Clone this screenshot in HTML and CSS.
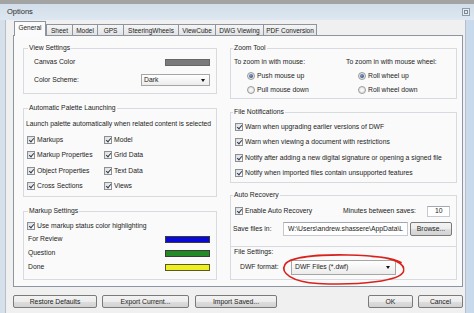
FILE: index.html
```html
<!DOCTYPE html>
<html>
<head>
<meta charset="utf-8">
<title>Options</title>
<link rel="stylesheet" href="styles.css">
</head>
<body>
<div class="window">
  <div class="titlebar">
    <span class="title">Options</span>
    <span class="close"><span class="close-inner"></span></span>
  </div>
  <div class="client">
    <div class="tabs">
      <div class="tab active t-general">General</div>
      <div class="tab t-sheet">Sheet</div>
      <div class="tab t-model">Model</div>
      <div class="tab t-gps">GPS</div>
      <div class="tab t-steer">SteeringWheels</div>
      <div class="tab t-cube">ViewCube</div>
      <div class="tab t-dwg">DWG Viewing</div>
      <div class="tab t-pdf">PDF Conversion</div>
    </div>
    <div class="panel">
      <div class="col col-l">
        <fieldset class="group g-view">
          <legend>View Settings</legend>
          <div class="gbody b-view">
            <div class="row r-14"><span>Canvas Color</span><span class="swatch sw-gray"></span></div>
            <div class="row r-14 mt4"><span>Color Scheme:</span><span class="combo combo-dark"><span class="combo-text">Dark</span><span class="arrow"></span></span></div>
          </div>
        </fieldset>

        <fieldset class="group g-auto">
          <legend>Automatic Palette Launching</legend>
          <div class="gbody b-auto">
            <div class="line r-14">Launch palette automatically when related content is selected</div>
            <div class="cb-grid">
              <div class="item"><span class="cb"></span><span>Markups</span></div>
              <div class="item"><span class="cb"></span><span>Model</span></div>
              <div class="item"><span class="cb"></span><span>Markup Properties</span></div>
              <div class="item"><span class="cb"></span><span>Grid Data</span></div>
              <div class="item"><span class="cb"></span><span>Object Properties</span></div>
              <div class="item"><span class="cb"></span><span>Text Data</span></div>
              <div class="item"><span class="cb"></span><span>Cross Sections</span></div>
              <div class="item"><span class="cb"></span><span>Views</span></div>
            </div>
          </div>
        </fieldset>

        <fieldset class="group g-markup">
          <legend>Markup Settings</legend>
          <div class="gbody b-markup">
            <div class="item r-13"><span class="cb"></span><span>Use markup status color highlighting</span></div>
            <div class="row r-14 indent1"><span>For Review</span><span class="swatch sw-blue"></span></div>
            <div class="row r-14 indent1"><span>Question</span><span class="swatch sw-green"></span></div>
            <div class="row r-14 indent1"><span>Done</span><span class="swatch sw-yellow"></span></div>
          </div>
        </fieldset>
      </div>

      <div class="col col-r">
        <fieldset class="group g-zoom">
          <legend>Zoom Tool</legend>
          <div class="gbody b-zoom">
            <div class="zgrid">
              <span class="zcell">To zoom in with mouse:</span>
              <span class="zcell">To zoom in with mouse wheel:</span>
              <div class="item ri1"><span class="rb on"></span><span>Push mouse up</span></div>
              <div class="item ri2"><span class="rb on"></span><span>Roll wheel up</span></div>
              <div class="item ri1"><span class="rb"></span><span>Pull mouse down</span></div>
              <div class="item ri2"><span class="rb"></span><span>Roll wheel down</span></div>
            </div>
          </div>
        </fieldset>

        <fieldset class="group g-notif">
          <legend>File Notifications</legend>
          <div class="gbody b-notif">
            <div class="item r-15"><span class="cb"></span><span>Warn when upgrading earlier versions of DWF</span></div>
            <div class="item r-16"><span class="cb"></span><span>Warn when viewing a document with restrictions</span></div>
            <div class="item r-15"><span class="cb"></span><span>Notify after adding a new digital signature or opening a signed file</span></div>
            <div class="item r-16"><span class="cb"></span><span>Notify when imported files contain unsupported features</span></div>
          </div>
        </fieldset>

        <fieldset class="group g-recov">
          <legend>Auto Recovery</legend>
          <div class="gbody b-recov">
            <div class="recov-row r-14">
              <div class="item"><span class="cb"></span><span>Enable Auto Recovery</span></div>
              <span>Minutes between saves:</span>
              <span class="input input-min">10</span>
            </div>
            <div class="save-row r-16 mt3">
              <span class="save-lbl">Save files in:</span>
              <span class="input input-path">W:\Users\andrew.shassere\AppData\L</span>
              <span class="btn btn-browse">Browse...</span>
            </div>
          </div>
        </fieldset>

        <div class="fileset">
          <div class="fs-title">File Settings:</div>
          <div class="fs-row r-16 mt2">
            <span class="fs-lbl">DWF format:</span>
            <span class="combo combo-dwf"><span class="combo-text">DWF Files (*.dwf)</span><span class="arrow"></span></span>
          </div>
        </div>
      </div>
    </div>
    <div class="buttons">
      <span class="btn b-restore">Restore Defaults</span>
      <span class="btn b-export">Export Current...</span>
      <span class="btn b-import">Import Saved...</span>
      <span class="btn b-ok">OK</span>
      <span class="btn b-cancel">Cancel</span>
    </div>
  </div>
</div>
<svg class="annot" width="474" height="313" viewBox="0 0 474 313" xmlns="http://www.w3.org/2000/svg">
  <path d="M372 256.5 C392 257.5 406 263 403.5 271.5 C400 281 360 285.5 318 283.5 C292 282 280 273 285 264.5 C290 257 318 254.5 348 255 C372 255.5 393 258 401 262.5" fill="none" stroke="#d9221e" stroke-width="1.6" stroke-linecap="round"/>
</svg>
</body>
</html>
```

FILE: styles.css
```css
* { box-sizing: border-box; }
html, body { margin: 0; padding: 0; }
body {
  width: 474px;
  height: 313px;
  overflow: hidden;
  position: relative;
  font-family: "Liberation Sans", Arial, sans-serif;
  font-size: 6.8px;
  line-height: 8px;
  color: #1c1c1c;
  background: #d3dfec;
}
.window {
  display: flex;
  flex-direction: column;
  height: 313px;
  padding: 0 8px 0 5px;
  background: linear-gradient(to right, #d6e0ea 0, #dbe5f0 60%, #c9d9ec 100%);
}
.titlebar {
  flex: none;
  height: 20px;
  margin: 0 -8px 0 -5px;
  padding: 0 4px 0 7px;
  border-top: 4px solid #a3a3a3;
  display: flex;
  align-items: center;
  justify-content: space-between;
  background: linear-gradient(#d2deea, #dde7f1);
}
.title { font-size: 7.5px; color: #2a2a2a; }
.close {
  width: 8px; height: 8px;
  border: 1px solid #8f9cab;
  display: flex; align-items: center; justify-content: center;
  background: #e4ebf3;
}
.close-inner { width: 4px; height: 4px; border: 1px solid #7d8896; }

.client {
  flex: 1;
  background: #f0f0f0;
  border-left: 1px solid #b4bfcb;
  border-right: 1px solid #b4bfcb;
  padding: 1px 2px 0 7px;
  display: flex;
  flex-direction: column;
}

/* tabs */
.tabs {
  position: relative;
  z-index: 2;
  height: 15px;
  display: flex;
  align-items: flex-end;
  padding-left: 1px;
}
.tab {
  height: 11px;
  margin-bottom: 1px;
  margin-right: -1px;
  border: 1px solid #8d95a0;
  border-bottom: none;
  background: linear-gradient(#f5f5f5, #e3e3e3);
  display: flex;
  align-items: center;
  justify-content: center;
  font-size: 6.5px;
  white-space: nowrap;
  padding-top: 1px;
}
.tab.active {
  height: 15px;
  margin-bottom: 0;
  margin-right: 0;
  background: #fbfbfb;
  padding-top: 0;
  padding-bottom: 2px;
}
.t-general { width: 32px; }
.t-sheet { width: 27px; }
.t-model { width: 26px; }
.t-gps { width: 27px; }
.t-steer { width: 56px; }
.t-cube { width: 38px; }
.t-dwg { width: 49px; }
.t-pdf { width: 54px; }

.panel {
  position: relative;
  z-index: 1;
  height: 252px;
  margin-top: -1px;
  border: 1px solid #8d95a0;
  background: #fafafa;
  padding: 7px 5px 0 9px;
  display: grid;
  grid-template-columns: 194px 227px;
  column-gap: 13px;
  align-items: start;
}
.col { display: flex; flex-direction: column; }

.group {
  margin: 0;
  padding: 0;
  min-width: 0;
  border: 1px solid #d7dbdf;
}
.group legend {
  padding: 0 1px;
  height: 10px;
  line-height: 10px;
}
.col-l legend { margin-left: 4px; }
.col-r legend { margin-left: 2px; }

.g-view { height: 51px; }
.g-auto { height: 94px; margin-top: 9px; }
.g-markup { height: 74px; margin-top: 9px; }
.g-zoom { height: 56px; }
.g-notif { height: 76px; margin-top: 8px; }
.g-recov { height: 57px; margin-top: 7px; }

.row { display: flex; align-items: center; justify-content: space-between; }
.line { display: flex; align-items: center; white-space: nowrap; }
.r-13 { height: 13px; }
.r-14 { height: 14px; }
.r-15 { height: 15px; }
.r-16 { height: 16px; }
.mt2 { margin-top: 2px; }
.mt3 { margin-top: 3px; }
.mt4 { margin-top: 4px; }
.indent1 { padding-left: 1px; }

.item {
  display: flex;
  align-items: center;
  gap: 2px;
  white-space: nowrap;
}

.b-view { padding: 2px 6px 0 10px; }
.b-auto { padding: 4px 2px 0 2px; }
.cb-grid {
  margin-top: 1px;
  padding-left: 1px;
  display: grid;
  grid-template-columns: 77px auto;
  grid-template-rows: 15px 16px 15px 15px;
}
.b-markup { padding: 3px 6px 0 3px; }
.b-zoom { padding: 2px 0 0 3px; }
.zgrid {
  display: grid;
  grid-template-columns: 112px auto;
  grid-template-rows: 14px 14px 14px;
  align-items: center;
}
.zcell { white-space: nowrap; }
.ri1 { margin-left: 13px; }
.ri2 { margin-left: 12px; }
.b-notif { padding: 2px 0 0 4px; }
.b-recov { padding: 4px 0 0 4px; }

.recov-row {
  display: grid;
  grid-template-columns: 108px 84px 23px;
  align-items: center;
}
.save-row { display: flex; align-items: center; }
.save-lbl { width: 50px; margin-left: -2px; }

.fileset {
  height: 33px;
  border: 1px solid #d7dbdf;
  border-top: none;
  padding-left: 3px;
}
.fs-title { height: 10px; line-height: 10px; }
.fs-row { display: flex; align-items: center; padding-left: 6px; }
.fs-lbl { width: 51px; }

/* controls */
.cb {
  position: relative;
  flex: none;
  width: 8px;
  height: 8px;
  border: 1px solid #8e8f8f;
  background: linear-gradient(135deg, #dcdcdc, #fbfbfb);
}
.cb::after {
  content: "";
  position: absolute;
  left: 1.9px;
  top: 0.2px;
  width: 2px;
  height: 4px;
  border: solid #2d3e5c;
  border-width: 0 1.2px 1.2px 0;
  transform: rotate(40deg);
}
.rb {
  position: relative;
  flex: none;
  width: 8px;
  height: 8px;
  border-radius: 50%;
  border: 1px solid #9a9a9a;
  background: radial-gradient(circle at 50% 50%, #ffffff, #d8d8d8);
}
.rb.on::after {
  content: "";
  position: absolute;
  left: 1px; top: 1px;
  width: 4px; height: 4px;
  border-radius: 50%;
  background: radial-gradient(circle at 40% 35%, #7f9cc8, #1f3d6e);
}
.swatch {
  flex: none;
  width: 45px;
  height: 7px;
  border: 1px solid #3b3b3b;
}
.sw-gray { background: #7a7a7a; border-color: #666; }
.sw-blue { background: #0a0ad6; }
.sw-green { background: #238a26; }
.sw-yellow { background: #eeee22; border-color: #5a5a20; }

.combo {
  display: flex;
  align-items: center;
  justify-content: space-between;
  border: 1px solid #a6a6a6;
  background: linear-gradient(#ffffff, #ececec);
  padding: 0 4px 0 2px;
}
.combo-dark { width: 69px; height: 12px; }
.combo-dwf { width: 105px; height: 15px; padding-left: 3px; padding-right: 5px; }
.arrow {
  width: 0; height: 0;
  border-left: 2.5px solid transparent;
  border-right: 2.5px solid transparent;
  border-top: 3px solid #111;
}

.input {
  display: flex;
  align-items: center;
  background: #fff;
  border: 1px solid #c5cad1;
  border-top-color: #a3a8b0;
  white-space: nowrap;
  overflow: hidden;
}
.input-min { width: 23px; height: 11px; padding-left: 7px; }
.input-path { width: 125px; height: 14px; padding-left: 4px; }

.btn {
  display: flex;
  align-items: center;
  justify-content: center;
  height: 13px;
  border: 1px solid #7a7a7a;
  border-radius: 2px;
  background: linear-gradient(#f3f3f3 0, #ececec 50%, #dedede 50%, #d2d2d2 100%);
  white-space: nowrap;
  color: #222;
}
.btn-browse { width: 42px; height: 14px; margin-left: 2px; }

.buttons {
  display: flex;
  align-items: center;
  height: 13px;
  margin-top: 8px;
}
.b-restore { width: 84px; }
.b-export { width: 87px; margin-left: 5px; }
.b-import { width: 82px; margin-left: 6px; }
.b-ok { width: 45px; margin-left: auto; }
.b-cancel { width: 45px; margin-left: 5px; }

.annot {
  position: absolute;
  left: 0;
  top: 0;
  pointer-events: none;
  z-index: 5;
}
```
